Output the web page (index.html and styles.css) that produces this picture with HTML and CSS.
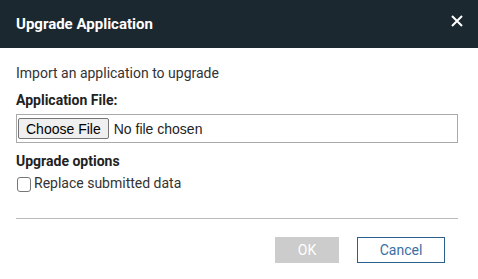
FILE: index.html
```html
<!DOCTYPE html>
<html lang="en">
<head>
  <meta charset="UTF-8" />
  <meta name="viewport" content="width=device-width, initial-scale=1.0" />
  <title>Upgrade Application</title>
  <link rel="stylesheet" href="styles.css">
</head>
<body>
  <div class="dialog">
    <div class="dialog-header">
      <h2>Upgrade Application</h2>
      <button class="close" title="Close">
        <svg width="12" height="12" viewBox="0 0 12 12">
          <path d="M1 1L11 11M11 1L1 11" stroke="#fff" stroke-width="2" />
        </svg>
      </button>
    </div>

    <div class="dialog-body">
      <p class="intro">Import an application to upgrade</p>
      <label class="field-label" for="appfile">Application File:</label>
      <div class="file-box">
        <input type="file" id="appfile" />
      </div>

      <p class="section-label">Upgrade options</p>
      <label class="check-row">
        <input type="checkbox" />
        <span>Replace submitted data</span>
      </label>

      <hr class="divider" />

      <div class="dialog-footer">
        <button class="btn btn-ok" disabled>OK</button>
        <button class="btn btn-cancel">Cancel</button>
      </div>
    </div>
  </div>
</body>
</html>
```

FILE: styles.css
```css
* {
  margin: 0;
  padding: 0;
  box-sizing: border-box;
}

body {
  font-family: 'Roboto', 'Liberation Sans', sans-serif;
  font-size: 14px;
  color: #333;
  background: #fff;
}

.dialog {
  width: 478px;
  height: 279px;
  background: #fff;
}

.dialog-header {
  height: 48px;
  background: #1c2830;
  display: flex;
  align-items: center;
  justify-content: space-between;
  padding: 0 15px 0 16px;
}

.dialog-header h2 {
  color: #fff;
  font-size: 15px;
  font-weight: 700;
  margin-top: -1px;
}

.close {
  background: none;
  border: none;
  width: 12px;
  height: 12px;
  display: flex;
  cursor: pointer;
  margin-top: -6px;
}

.dialog-body {
  padding: 16px 20px 0 16px;
}

.intro {
  line-height: 18px;
}

.field-label {
  display: block;
  margin-top: 9px;
  line-height: 18px;
  font-weight: 700;
  color: #222;
}

.file-box {
  margin-top: 5px;
  height: 29px;
  border: 1px solid #aaa;
  padding: 3px 1px;
  display: flex;
  align-items: center;
}

.file-box input {
  font-family: 'Liberation Sans', Arial, sans-serif;
  font-size: 14px;
  color: #222;
}

.file-box input::file-selector-button {
  font-family: 'Liberation Sans', Arial, sans-serif;
  font-size: 14px;
  height: 21px;
  padding: 0 7px;
  margin-right: 5px;
  background: #efefef;
  border: 1px solid #767676;
  border-radius: 2px;
  color: #000;
}

.section-label {
  margin-top: 9px;
  line-height: 18px;
  font-weight: 700;
  color: #222;
}

.check-row {
  display: flex;
  align-items: flex-start;
  margin-top: 3px;
  line-height: 20px;
  font-size: 14px;
  color: #333;
}

.check-row input {
  appearance: none;
  width: 14px;
  height: 15px;
  border: 1px solid #777;
  border-radius: 3px;
  margin: 4px 3px 0 1px;
  background: #fff;
}

.divider {
  border: none;
  border-top: 1px solid #bbb;
  margin-top: 25px;
}

.dialog-footer {
  display: flex;
  justify-content: flex-end;
  gap: 18px;
  padding: 18px 13px 0 0;
}

.btn {
  height: 26px;
  font-family: 'Roboto', sans-serif;
  font-size: 14px;
  cursor: pointer;
}

.btn-ok {
  width: 64px;
  background: #cccccc;
  border: none;
  color: #fff;
}

.btn-cancel {
  width: 88px;
  background: #fff;
  border: 1px solid #2b5f8c;
  color: #3a6ea5;
}
```
